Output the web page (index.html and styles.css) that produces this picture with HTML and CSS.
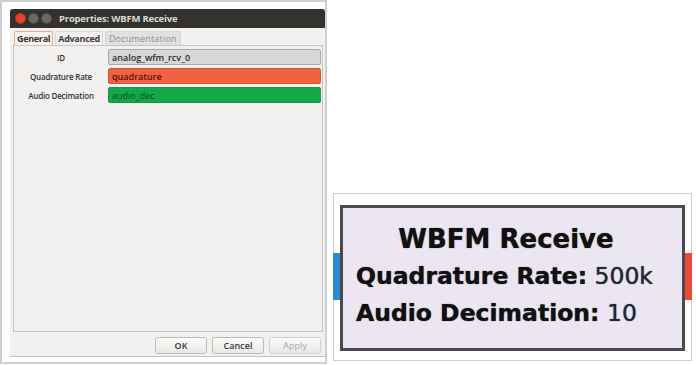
FILE: index.html
```html
<!DOCTYPE html>
<html>
<head>
	<meta charset="utf-8">
	<title>Properties: WBFM Receive</title>
	<link rel="stylesheet" href="styles.css">
</head>
<body>
	<div class="page">
		<div class="shot">
			<div class="window">
				<div class="titlebar">
					<span class="dot close"></span>
					<span class="dot"></span>
					<span class="dot"></span>
					<span class="title">Properties: WBFM Receive</span>
				</div>
				<div class="tabs">
					<span class="tab active">General</span>
					<span class="tab">Advanced</span>
					<span class="tab off">Documentation</span>
				</div>
				<div class="notebook">
					<div class="row">
						<label>ID</label>
						<span class="entry grey">analog_wfm_rcv_0</span>
					</div>
					<div class="row">
						<label>Quadrature Rate</label>
						<span class="entry red">quadrature</span>
					</div>
					<div class="row">
						<label>Audio Decimation</label>
						<span class="entry green">audio_dec</span>
					</div>
				</div>
				<div class="buttons">
					<button>OK</button>
					<button>Cancel</button>
					<button class="off">Apply</button>
				</div>
			</div>
		</div>
		<div class="canvas">
			<div class="block">
				<span class="port in"></span>
				<span class="port out"></span>
				<h2>WBFM Receive</h2>
				<p><b>Quadrature Rate:</b> 500k</p>
				<p><b>Audio Decimation:</b> 10</p>
			</div>
		</div>
	</div>
</body>
</html>
```

FILE: styles.css
```css
body {
	margin: 0;
	background-color: #fff;
	font-family: "Open Sans", "Noto Sans", sans-serif;
}

.page {
	display: flex;
	align-items: flex-start;
	width: 696px;
	height: 365px;
}

.shot {
	box-sizing: border-box;
	width: 327px;
	height: 364px;
	border: 2px solid #cfcfcf;
	padding: 7px 0 0 8px;
}

.window {
	display: flex;
	flex-direction: column;
	width: 315px;
	height: 348px;
	background-color: #f2f1f0;
	border-bottom: 1px solid #c4c3c0;
	box-sizing: border-box;
}

.titlebar {
	display: flex;
	align-items: center;
	height: 19px;
	padding-left: 5px;
	background-color: #33322e;
	border-radius: 3px 3px 0 0;
}

.dot {
	width: 9px;
	height: 9px;
	border-radius: 50%;
	margin-right: 2px;
	background-color: #6a6964;
	border: 1px solid #4c4b47;
}

.dot.close {
	background-color: #e2412a;
	border-color: #b33520;
}

.title {
	margin-left: 5px;
	color: #dcdad5;
	font-size: 9.5px;
	font-weight: 700;
	letter-spacing: -0.2px;
}

.tabs {
	display: flex;
	gap: 2px;
	padding: 3px 0 0 4px;
	height: 14px;
}

.tab {
	display: flex;
	align-items: center;
	padding: 0 2px;
	font-size: 9px;
	font-weight: 700;
	color: #3c3c3c;
	border: 1px solid #d8d6d2;
	border-bottom: none;
	border-radius: 2px 2px 0 0;
	letter-spacing: -0.3px;
}

.tab.active {
	background-color: #fbf3ee;
	border-color: #eea78f;
	color: #333;
}

.tab.off {
	background-color: #e2e1df;
	color: #8d8d8d;
	font-weight: 400;
	padding: 0 3px;
	letter-spacing: 0.2px;
}

.notebook {
	box-sizing: border-box;
	margin: 0 2px 0 3px;
	height: 287px;
	border: 1px solid #c8c6c2;
	padding: 3px 1px 0 0;
	display: flex;
	flex-direction: column;
	gap: 3px;
}

.row {
	display: flex;
	align-items: center;
	height: 16px;
}

.row label {
	width: 94px;
	text-align: center;
	font-size: 8px;
	font-weight: 600;
	color: #333;
	letter-spacing: -0.2px;
}

.entry {
	flex: 1;
	box-sizing: border-box;
	height: 16px;
	padding-left: 3px;
	font-size: 9px;
	font-weight: 600;
	line-height: 15px;
	border: 1px solid #a9a8a5;
	border-radius: 2px;
}

.entry.grey {
	background-color: #d7d7d7;
	color: #2a2a2a;
}

.entry.red {
	background-color: #f0613f;
	color: #5a1208;
	border-color: #d8553a;
}

.entry.green {
	background-color: #13a94b;
	color: #0c4a22;
	font-weight: 400;
	border-color: #129a45;
}

.buttons {
	display: flex;
	justify-content: flex-end;
	gap: 5px;
	padding: 5px 4px 0 0;
}

.buttons button {
	width: 52px;
	height: 17px;
	padding: 0;
	font-family: inherit;
	font-size: 9px;
	font-weight: 600;
	color: #3a3a3a;
	background: linear-gradient(#fbfbfa, #e9e8e6);
	border: 1px solid #bdbbb7;
	border-radius: 3px;
}

.buttons button.off {
	color: #a9a8a5;
	font-weight: 400;
	border-color: #d3d1cd;
}

.canvas {
	position: relative;
	box-sizing: border-box;
	width: 359px;
	height: 168px;
	margin: 193px 0 0 6px;
	border: 1px solid #cfcfcf;
	padding: 11px 0 0 6px;
}

.block {
	position: relative;
	box-sizing: border-box;
	width: 345px;
	height: 146px;
	background-color: #ebe6f2;
	border: 3px solid #4a4a4c;
	padding: 13px 0 0 13px;
	font-family: "DejaVu Sans", sans-serif;
	color: #111;
	text-shadow: 0 0 1px #333;
}

.block h2 {
	margin: 0 26px 0 0;
	text-align: center;
	font-size: 26px;
	line-height: 37px;
	font-weight: 700;
}

.block p {
	margin: 0;
	font-size: 23.5px;
	line-height: 37px;
	color: #1d2a3a;
}

.block b {
	color: #111;
}

.port {
	position: absolute;
	top: 45px;
	width: 7px;
	height: 47px;
}

.port.in {
	left: -10px;
	background-color: #2f8ad0;
}

.port.out {
	right: -10px;
	background-color: #ea4a3a;
}
```
